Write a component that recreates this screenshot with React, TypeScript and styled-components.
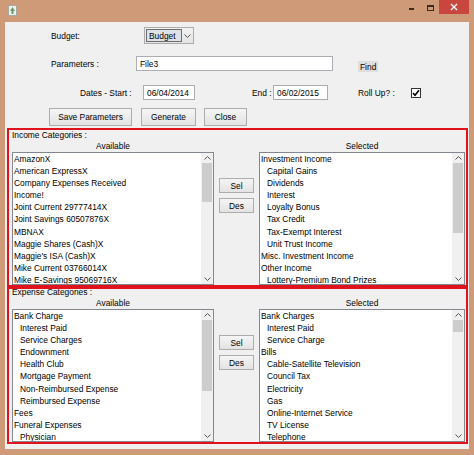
import React from "react";
import styled, { createGlobalStyle } from "styled-components";

const GlobalStyle = createGlobalStyle`
  html, body { margin: 0; padding: 0; }
  body {
    font-family: "Liberation Sans", Arial, sans-serif;
    font-size: 8.4px;
    color: #000;
  }
`;

const Window = styled.div`
  width: 474px;
  height: 455px;
  background: #cf9a77;
  display: flex;
  flex-direction: column;
  overflow: hidden;
`;

const TitleBar = styled.div`
  height: 22px;
  display: flex;
  align-items: flex-start;
  flex: none;
`;

const AppIcon = styled.div`
  margin: 5px 0 0 8px;
  width: 9px;
  height: 11px;
  display: flex;
`;

const Spacer = styled.div`
  flex: 1;
`;

const MinGlyph = styled.div`
  margin-top: 8px;
  width: 5px;
  height: 2px;
  background: #3a2a20;
`;

const MaxGlyph = styled.div`
  margin: 5px 0 0 13px;
  width: 7px;
  height: 6px;
  box-sizing: border-box;
  border: 1px solid #3a2a20;
  border-top-width: 2px;
`;

const CloseBtn = styled.div`
  margin: 0 5px 0 5px;
  width: 30px;
  height: 14px;
  background: #c9463f;
  display: flex;
  align-items: center;
  justify-content: center;
`;

const Content = styled.div`
  margin: 0 5px;
  height: 427px;
  background: #f0f0f0;
  display: flex;
  flex-direction: column;
  flex: none;
`;

const Form = styled.div`
  padding-top: 5px;
  display: flex;
  flex-direction: column;
`;

const Row = styled.div<{ $h: number; $mt?: number; $pl: number }>`
  display: flex;
  align-items: center;
  height: ${(p) => p.$h}px;
  margin-top: ${(p) => p.$mt ?? 0}px;
  padding-left: ${(p) => p.$pl}px;
`;

const Label = styled.div<{ $w: number; $ml?: number }>`
  width: ${(p) => p.$w}px;
  margin-left: ${(p) => p.$ml ?? 0}px;
  flex: none;
  white-space: nowrap;
`;

const TextField = styled.div<{ $w: number; $ml?: number }>`
  width: ${(p) => p.$w}px;
  margin-left: ${(p) => p.$ml ?? 0}px;
  height: 15px;
  box-sizing: border-box;
  border: 1px solid #abadb3;
  background: #fff;
  padding-left: 3px;
  display: flex;
  align-items: center;
  flex: none;
`;

const Combo = styled.div`
  width: 50px;
  height: 17px;
  box-sizing: border-box;
  border: 1px solid #acacac;
  background: linear-gradient(#f2f2f2, #e4e4e4);
  display: flex;
  align-items: center;
  padding: 1px;
`;

const ComboValue = styled.div`
  width: 36px;
  height: 100%;
  box-sizing: border-box;
  border: 1px solid #6e6e6e;
  background: #dde2e8;
  display: flex;
  align-items: center;
  padding-left: 2px;
`;

const ComboArrow = styled.div`
  flex: 1;
  display: flex;
  align-items: center;
  justify-content: center;
`;

const FindButton = styled.div`
  margin-left: 25px;
  align-self: flex-end;
  height: 11px;
  padding: 0 2px;
  background: #dedede;
  display: flex;
  align-items: center;
`;

const CheckBox = styled.div`
  width: 10px;
  height: 10px;
  box-sizing: border-box;
  border: 1px solid #333;
  background: #fff;
  display: flex;
  align-items: center;
  justify-content: center;
`;

const Button = styled.div<{ $w: number; $h: number; $ml?: number }>`
  width: ${(p) => p.$w}px;
  height: ${(p) => p.$h}px;
  margin-left: ${(p) => p.$ml ?? 0}px;
  box-sizing: border-box;
  border: 1px solid #adadad;
  background: linear-gradient(#f5f5f5, #e3e3e3);
  display: flex;
  align-items: center;
  justify-content: center;
  flex: none;
  white-space: nowrap;
`;

const Panel = styled.div<{ $mt: number }>`
  margin: ${(p) => p.$mt}px 0 0 2px;
  width: 461px;
  box-sizing: border-box;
  border: 2px solid #e0131c;
  padding: 0 1px 0 3px;
  display: flex;
  flex-direction: column;
`;

const PanelTitle = styled.div<{ $h: number }>`
  height: ${(p) => p.$h}px;
  line-height: 11px;
  overflow: hidden;
  display: flex;
  align-items: flex-end;
  white-space: nowrap;
`;

const ListsGrid = styled.div`
  display: grid;
  grid-template-columns: 202px 35px 206px;
  column-gap: 5px;
  align-items: start;
`;

const Column = styled.div`
  display: flex;
  flex-direction: column;
`;

const ColumnHeader = styled.div`
  height: 11px;
  line-height: 11px;
  text-align: center;
`;

const ListBox = styled.div<{ $h: number }>`
  height: ${(p) => p.$h}px;
  box-sizing: border-box;
  border: 1px solid #828790;
  background: #fff;
  display: flex;
`;

const Items = styled.div`
  flex: 1;
  overflow: hidden;
`;

const Item = styled.div<{ $indent: boolean }>`
  height: 12.1px;
  line-height: 12px;
  padding-left: ${(p) => (p.$indent ? 7 : 1)}px;
  white-space: nowrap;
`;

const ScrollBar = styled.div`
  width: 12px;
  flex: none;
  display: flex;
  flex-direction: column;
  background: #f0f0f0;
`;

const ArrowBtn = styled.div`
  height: 10px;
  flex: none;
  display: flex;
  align-items: center;
  justify-content: center;
`;

const Thumb = styled.div<{ $h: number }>`
  height: ${(p) => p.$h}px;
  margin: 0 1px;
  background: #cdcdcd;
  flex: none;
`;

const Track = styled.div`
  flex: 1;
`;

const ButtonStack = styled.div`
  display: flex;
  flex-direction: column;
  gap: 5px;
  padding-top: 37px;
`;

const Chevron = ({ up }: { up?: boolean }) => (
  <svg width="7" height="4" viewBox="0 0 7 4">
    <polyline
      points={up ? "0.5,3.5 3.5,0.5 6.5,3.5" : "0.5,0.5 3.5,3.5 6.5,0.5"}
      fill="none"
      stroke="#555"
      strokeWidth="1"
    />
  </svg>
);

type Entry = [string, boolean];

const List = ({ items, thumb, h }: { items: Entry[]; thumb: number; h: number }) => (
  <ListBox $h={h}>
    <Items>
      {items.map(([t, ind], i) => (
        <Item key={i} $indent={ind}>
          {t}
        </Item>
      ))}
    </Items>
    <ScrollBar>
      <ArrowBtn>
        <Chevron up />
      </ArrowBtn>
      <Thumb $h={thumb} />
      <Track />
      <ArrowBtn>
        <Chevron />
      </ArrowBtn>
    </ScrollBar>
  </ListBox>
);

const incomeAvail: Entry[] = [
  ["AmazonX", false],
  ["American ExpressX", false],
  ["Company Expenses Received", false],
  ["Income!", false],
  ["Joint Current 29777414X", false],
  ["Joint Savings 60507876X", false],
  ["MBNAX", false],
  ["Maggie Shares (Cash)X", false],
  ["Maggie's ISA (Cash)X", false],
  ["Mike Current 03766014X", false],
  ["Mike E-Savings 95069716X", false],
];

const incomeSel: Entry[] = [
  ["Investment Income", false],
  ["Capital Gains", true],
  ["Dividends", true],
  ["Interest", true],
  ["Loyalty Bonus", true],
  ["Tax Credit", true],
  ["Tax-Exempt Interest", true],
  ["Unit Trust Income", true],
  ["Misc. Investment Income", false],
  ["Other Income", false],
  ["Lottery-Premium Bond Prizes", true],
];

const expenseAvail: Entry[] = [
  ["Bank Charge", false],
  ["Interest Paid", true],
  ["Service Charges", true],
  ["Endownment", true],
  ["Health Club", true],
  ["Mortgage Payment", true],
  ["Non-Reimbursed Expense", true],
  ["Reimbursed Expense", true],
  ["Fees", false],
  ["Funeral Expenses", false],
  ["Physician", true],
];

const expenseSel: Entry[] = [
  ["Bank Charges", false],
  ["Interest Paid", true],
  ["Service Charge", true],
  ["Bills", false],
  ["Cable-Satellite Television", true],
  ["Council Tax", true],
  ["Electricity", true],
  ["Gas", true],
  ["Online-Internet Service", true],
  ["TV License", true],
  ["Telephone", true],
];

const CategoryPanel = ({
  title,
  titleH,
  mt,
  avail,
  sel,
  thumbs,
  listH,
}: {
  title: string;
  titleH: number;
  mt: number;
  avail: Entry[];
  sel: Entry[];
  thumbs: [number, number];
  listH: number;
}) => (
  <Panel $mt={mt}>
    <PanelTitle $h={titleH}>{title}</PanelTitle>
    <ListsGrid>
      <Column>
        <ColumnHeader>Available</ColumnHeader>
        <List items={avail} thumb={thumbs[0]} h={listH} />
      </Column>
      <ButtonStack>
        <Button $w={35} $h={15}>Sel</Button>
        <Button $w={35} $h={15}>Des</Button>
      </ButtonStack>
      <Column>
        <ColumnHeader>Selected</ColumnHeader>
        <List items={sel} thumb={thumbs[1]} h={listH} />
      </Column>
    </ListsGrid>
  </Panel>
);

export default function App() {
  return (
    <>
      <GlobalStyle />
      <Window>
        <TitleBar>
          <AppIcon>
            <svg width="9" height="11" viewBox="0 0 9 11">
              <rect x="0.5" y="0.5" width="8" height="10" fill="#eef0ec" stroke="#a8a8a0" />
              <polygon points="4.5,2 7,6 5.5,6 5.5,9 3.5,9 3.5,6 2,6" fill="#6f9a6a" />
            </svg>
          </AppIcon>
          <Spacer />
          <MinGlyph />
          <MaxGlyph />
          <CloseBtn>
            <svg width="8" height="8" viewBox="0 0 8 8">
              <path d="M1 1 L7 7 M7 1 L1 7" stroke="#fff" strokeWidth="1.4" />
            </svg>
          </CloseBtn>
        </TitleBar>
        <Content>
          <Form>
            <Row $h={17} $pl={46}>
              <Label $w={93}>Budget:</Label>
              <Combo>
                <ComboValue>Budget</ComboValue>
                <ComboArrow>
                  <Chevron />
                </ComboArrow>
              </Combo>
            </Row>
            <Row $h={17} $mt={11} $pl={46}>
              <Label $w={85}>Parameters :</Label>
              <TextField $w={197}>File3</TextField>
              <FindButton>Find</FindButton>
            </Row>
            <Row $h={15} $mt={13} $pl={75}>
              <Label $w={63}>Dates - Start :</Label>
              <TextField $w={52}>06/04/2014</TextField>
              <Label $w={21} $ml={57}>End :</Label>
              <TextField $w={55}>06/02/2015</TextField>
              <Label $w={53} $ml={30}>Roll Up? :</Label>
              <CheckBox>
                <svg width="8" height="8" viewBox="0 0 8 8">
                  <path d="M1 4 L3 6.3 L7 1.2" fill="none" stroke="#000" strokeWidth="1.5" />
                </svg>
              </CheckBox>
            </Row>
            <Row $h={18} $mt={8} $pl={44}>
              <Button $w={83} $h={18}>Save Parameters</Button>
              <Button $w={55} $h={18} $ml={9}>Generate</Button>
              <Button $w={43} $h={18} $ml={8}>Close</Button>
            </Row>
          </Form>
          <CategoryPanel
            title="Income Categories :"
            titleH={11}
            mt={2}
            avail={incomeAvail}
            sel={incomeSel}
            thumbs={[39, 70]}
            listH={133}
          />
          <CategoryPanel
            title="Expense Categories :"
            titleH={9}
            mt={0}
            avail={expenseAvail}
            sel={expenseSel}
            thumbs={[71, 12]}
            listH={133}
          />
        </Content>
      </Window>
    </>
  );
}
